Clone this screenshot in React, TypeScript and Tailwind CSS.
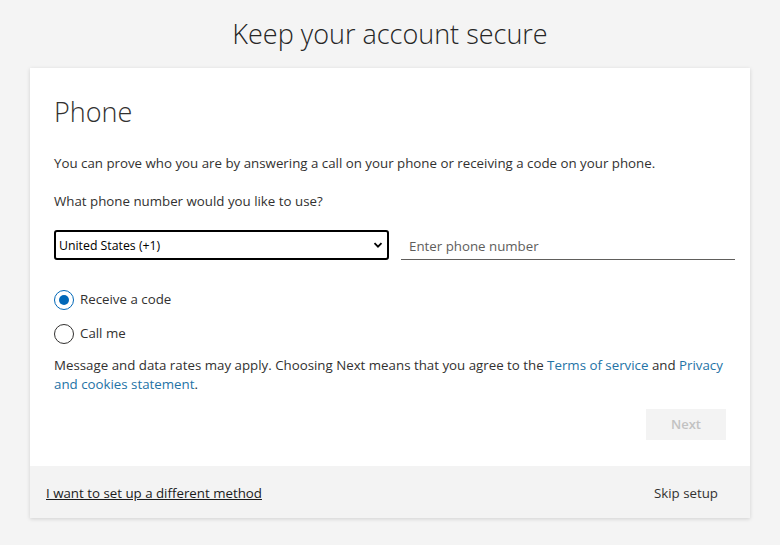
import React from "react";

export default function App() {
  return (
    <div className="min-h-[545px] w-full bg-[#f4f4f4] text-[#1b1b1b]" style={{ fontFamily: '"Open Sans", "Noto Sans", sans-serif' }}>
      <div className="flex flex-col items-center pt-[14px]">
        <h1 className="text-[27px] leading-[40px] font-light text-[#262626]">Keep your account secure</h1>
      </div>
      <div className="mx-[30px] mt-[14px] bg-white shadow-[0_1px_4px_rgba(0,0,0,0.15)]">
        <div className="px-[24px] pt-[26px] pb-[26px]">
          <h2 className="text-[27px] leading-[36px] font-light text-[#323130]">Phone</h2>
          <p className="mt-[23px] text-[13.3px] leading-[20px] text-[#323130]">You can prove who you are by answering a call on your phone or receiving a code on your phone.</p>
          <p className="mt-[18px] text-[13.3px] leading-[20px] text-[#323130]">What phone number would you like to use?</p>
          <div className="mt-[19px] flex gap-[12px]">
            <div className="flex h-[30px] w-[335px] shrink-0 items-center justify-between rounded-[3px] border-2 border-black pl-[3px] pr-[4px]">
              <span className="pt-[3px] text-[12.3px] text-black">United States (+1)</span>
              <svg width="10" height="10" viewBox="0 0 10 10"><path d="M1.5 3.2 L5 6.7 L8.5 3.2" fill="none" stroke="black" strokeWidth="1.8" /></svg>
            </div>
            <div className="flex h-[30px] w-[334px] shrink-0 items-center border-b border-[#605e5c] pl-[8px] pt-[4px]">
              <span className="text-[13.3px] text-[#605e5c]">Enter phone number</span>
            </div>
          </div>
          <div className="mt-[30px] flex items-center gap-[6px]">
            <div className="flex h-[20px] w-[20px] items-center justify-center rounded-full border border-[#0067b8]">
              <div className="h-[10px] w-[10px] rounded-full bg-[#0067b8]" />
            </div>
            <span className="text-[13.3px] text-[#323130]">Receive a code</span>
          </div>
          <div className="mt-[14px] flex items-center gap-[6px]">
            <div className="h-[20px] w-[20px] rounded-full border border-[#323130]" />
            <span className="text-[13.3px] text-[#323130]">Call me</span>
          </div>
          <p className="mt-[12px] text-[13.3px] leading-[19px] text-[#323130]">
            Message and data rates may apply. Choosing Next means that you agree to the <span className="text-[#2473a6]">Terms of service</span> and <span className="text-[#2473a6]">Privacy and cookies statement</span>.
          </p>
          <div className="mt-[15px] flex justify-end">
            <div className="flex h-[31px] w-[80px] items-center justify-center bg-[#f3f3f3] text-[13px] font-semibold text-[#c2c2c2]">Next</div>
          </div>
        </div>
        <div className="flex h-[52px] items-center justify-between bg-[#f3f3f3] pl-[16px] pr-[32px] pt-[4px]">
          <span className="text-[13.3px] underline text-[#1b1b1b]">I want to set up a different method</span>
          <span className="text-[13.3px] text-[#323130]">Skip setup</span>
        </div>
      </div>
    </div>
  );
}
